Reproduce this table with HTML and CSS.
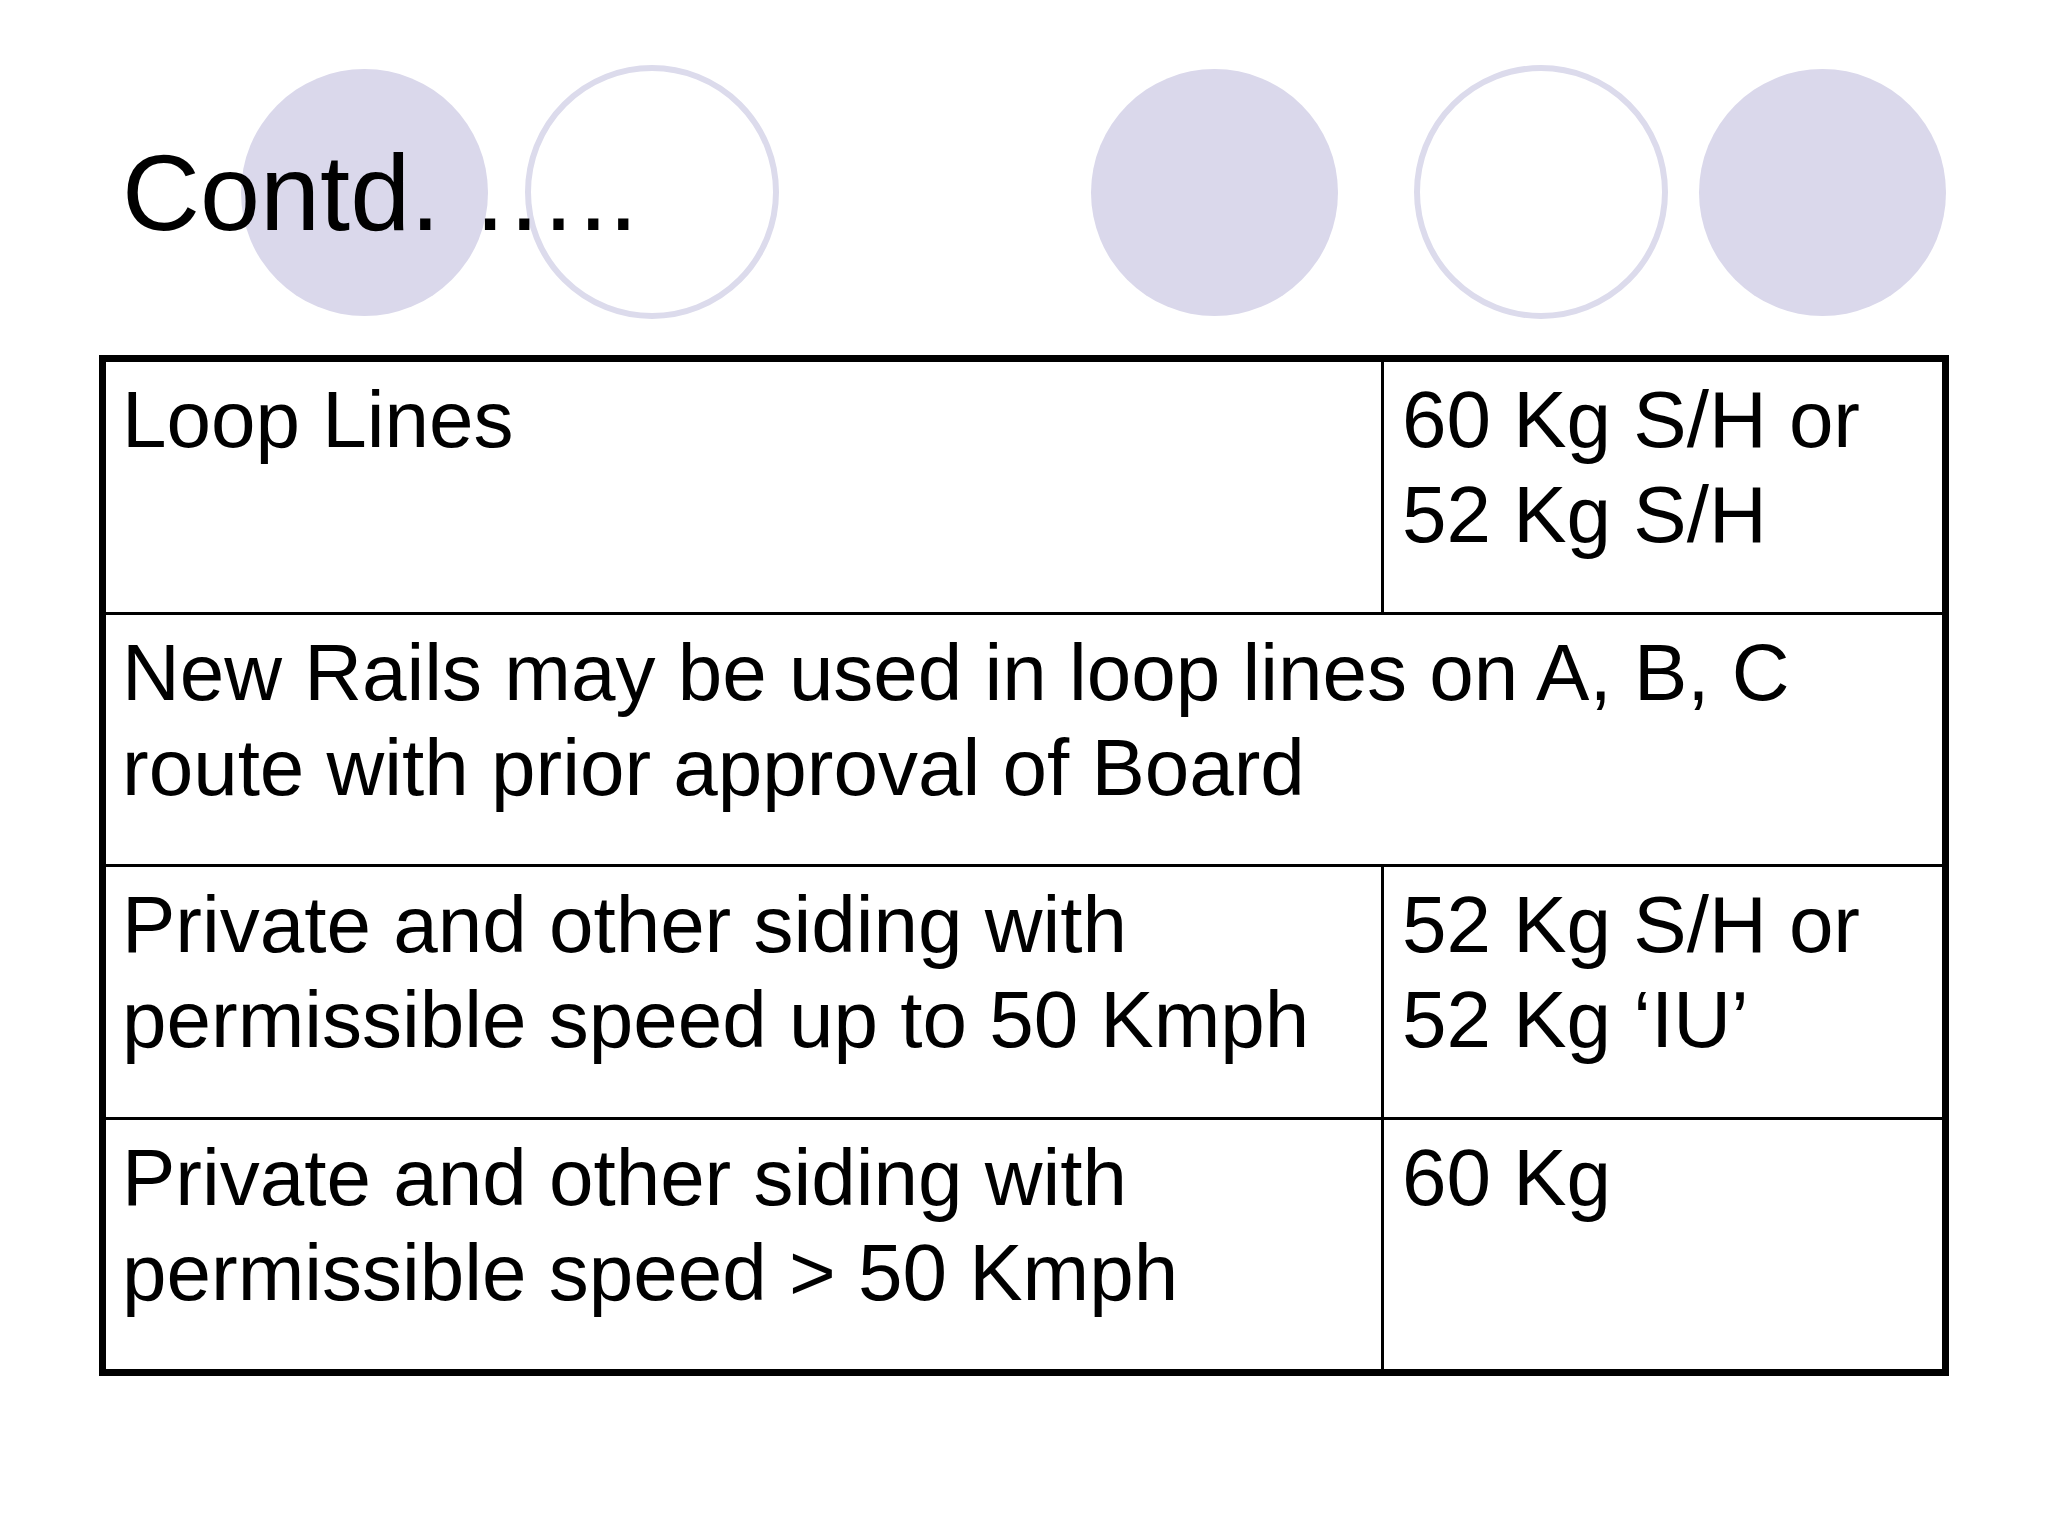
FILE: index.html
```html
<!DOCTYPE html>
<html lang="en">
<head>
<meta charset="utf-8">
<title>Contd.</title>
<link rel="stylesheet" href="styles.css">
</head>
<body>
<div class="slide">
  <div class="decor" aria-hidden="true">
    <span class="dot filled c1"></span>
    <span class="dot ring c2"></span>
    <span class="dot filled c3"></span>
    <span class="dot ring c4"></span>
    <span class="dot filled c5"></span>
  </div>
  <h1 class="title">Contd. &hellip;..</h1>
  <div class="grid-table">
    <div class="row">
      <div class="cell main">Loop Lines</div>
      <div class="cell side">60 Kg S/H or<br>52 Kg S/H</div>
    </div>
    <div class="row">
      <div class="cell full">New Rails may be used in loop lines on A, B, C route with prior approval of Board</div>
    </div>
    <div class="row">
      <div class="cell main">Private and other siding with<br>permissible speed up to 50 Kmph</div>
      <div class="cell side">52 Kg S/H or<br>52 Kg &lsquo;IU&rsquo;</div>
    </div>
    <div class="row">
      <div class="cell main">Private and other siding with<br>permissible speed &gt; 50 Kmph</div>
      <div class="cell side">60 Kg</div>
    </div>
  </div>
</div>
</body>
</html>
```

FILE: styles.css
```css
html, body {
  margin: 0;
  padding: 0;
  background: #ffffff;
}

.slide {
  position: relative;
  width: 2048px;
  height: 1536px;
  overflow: hidden;
  background: #ffffff;
  font-family: "Liberation Sans", Arial, sans-serif;
  color: #000000;
  padding: 0 99px;
  box-sizing: border-box;
}

.decor {
  position: absolute;
  inset: 0;
  z-index: 0;
}

.dot {
  position: absolute;
  border-radius: 50%;
  box-sizing: border-box;
}

.dot.filled {
  width: 247px;
  height: 247px;
  margin: -123.5px 0 0 -123.5px;
  background: #dad8eb;
}

.dot.ring {
  width: 254px;
  height: 254px;
  margin: -127px 0 0 -127px;
  border: 6px solid #dcdbec;
  background: #ffffff;
}

.c1 { left: 364px; top: 192px; }
.c2 { left: 652px; top: 192px; }
.c3 { left: 1214px; top: 192px; }
.c4 { left: 1541px; top: 192px; }
.c5 { left: 1822px; top: 192px; }

.title {
  position: relative;
  z-index: 1;
  margin: 0;
  padding: 139px 0 0 23px;
  height: 108px;
  font-size: 108px;
  line-height: 108px;
  font-weight: normal;
  white-space: nowrap;
}

.grid-table {
  position: relative;
  z-index: 1;
  margin-top: 108px;
  width: 1850px;
  height: 1021px;
  border: 7px solid #000000;
  box-sizing: border-box;
  display: flex;
  flex-direction: column;
  background: #ffffff;
}

.row {
  flex: 1;
  display: flex;
  min-height: 0;
}

.row + .row {
  border-top: 3px solid #000000;
}

.cell {
  font-size: 80px;
  line-height: 95px;
  padding: 10px 16px 0 16px;
  box-sizing: border-box;
  white-space: nowrap;
}

.cell.main {
  width: 1278px;
  border-right: 3px solid #000000;
}

.cell.side {
  flex: 1;
  padding-left: 18px;
}

.cell.full {
  flex: 1;
  white-space: normal;
  padding-right: 16px;
}
```
